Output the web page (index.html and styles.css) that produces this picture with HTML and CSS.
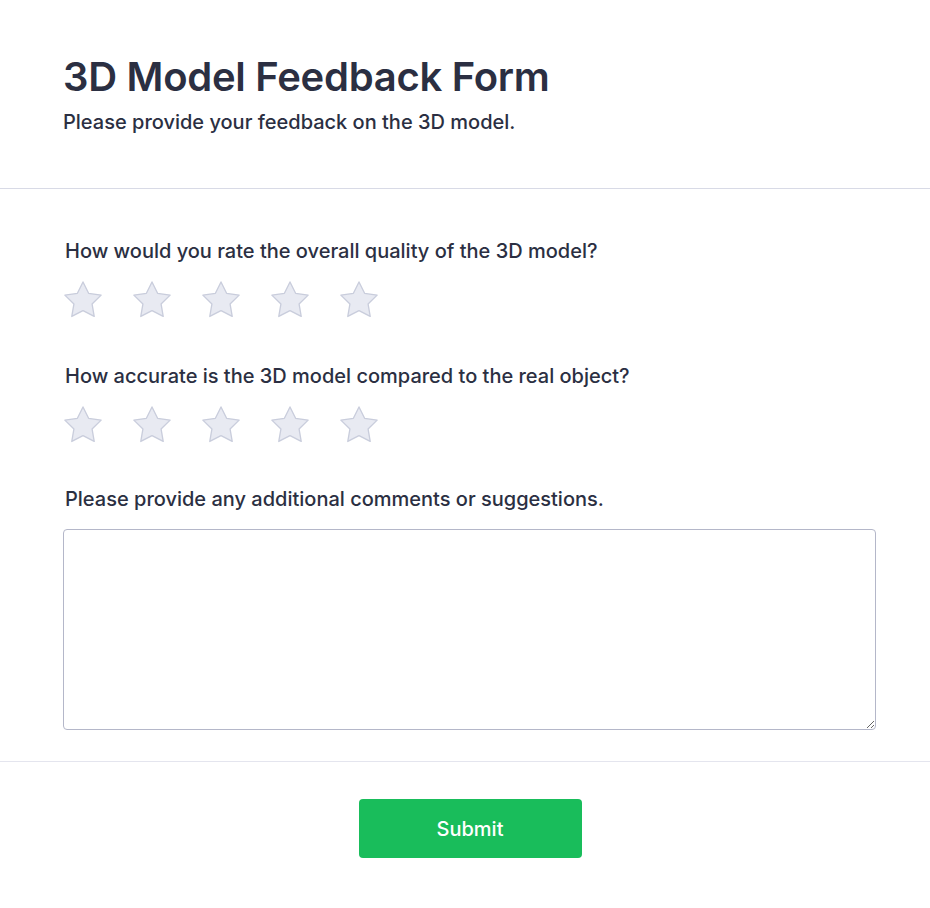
FILE: index.html
```html
<!DOCTYPE html>
<html lang="en">
<head>
<meta charset="utf-8">
<title>3D Model Feedback Form</title>
<link rel="stylesheet" href="styles.css">
</head>
<body>
<div class="form">
  <header class="form-header">
    <h1 class="title">3D Model Feedback Form</h1>
    <p class="subtitle">Please provide your feedback on the 3D model.</p>
  </header>
  <section class="form-body">
    <div class="question">
      <label class="q-label">How would you rate the overall quality of the 3D model?</label>
      <div class="stars">
        <svg class="star" viewBox="2 2 20 20"><path d="M12 2.5l2.95 5.98 6.6.96-4.78 4.65 1.13 6.57L12 17.56l-5.9 3.1 1.13-6.57-4.78-4.65 6.6-.96z"/></svg>
        <svg class="star" viewBox="2 2 20 20"><path d="M12 2.5l2.95 5.98 6.6.96-4.78 4.65 1.13 6.57L12 17.56l-5.9 3.1 1.13-6.57-4.78-4.65 6.6-.96z"/></svg>
        <svg class="star" viewBox="2 2 20 20"><path d="M12 2.5l2.95 5.98 6.6.96-4.78 4.65 1.13 6.57L12 17.56l-5.9 3.1 1.13-6.57-4.78-4.65 6.6-.96z"/></svg>
        <svg class="star" viewBox="2 2 20 20"><path d="M12 2.5l2.95 5.98 6.6.96-4.78 4.65 1.13 6.57L12 17.56l-5.9 3.1 1.13-6.57-4.78-4.65 6.6-.96z"/></svg>
        <svg class="star" viewBox="2 2 20 20"><path d="M12 2.5l2.95 5.98 6.6.96-4.78 4.65 1.13 6.57L12 17.56l-5.9 3.1 1.13-6.57-4.78-4.65 6.6-.96z"/></svg>
      </div>
    </div>
    <div class="question">
      <label class="q-label">How accurate is the 3D model compared to the real object?</label>
      <div class="stars">
        <svg class="star" viewBox="2 2 20 20"><path d="M12 2.5l2.95 5.98 6.6.96-4.78 4.65 1.13 6.57L12 17.56l-5.9 3.1 1.13-6.57-4.78-4.65 6.6-.96z"/></svg>
        <svg class="star" viewBox="2 2 20 20"><path d="M12 2.5l2.95 5.98 6.6.96-4.78 4.65 1.13 6.57L12 17.56l-5.9 3.1 1.13-6.57-4.78-4.65 6.6-.96z"/></svg>
        <svg class="star" viewBox="2 2 20 20"><path d="M12 2.5l2.95 5.98 6.6.96-4.78 4.65 1.13 6.57L12 17.56l-5.9 3.1 1.13-6.57-4.78-4.65 6.6-.96z"/></svg>
        <svg class="star" viewBox="2 2 20 20"><path d="M12 2.5l2.95 5.98 6.6.96-4.78 4.65 1.13 6.57L12 17.56l-5.9 3.1 1.13-6.57-4.78-4.65 6.6-.96z"/></svg>
        <svg class="star" viewBox="2 2 20 20"><path d="M12 2.5l2.95 5.98 6.6.96-4.78 4.65 1.13 6.57L12 17.56l-5.9 3.1 1.13-6.57-4.78-4.65 6.6-.96z"/></svg>
      </div>
    </div>
    <div class="question">
      <label class="q-label" for="comments">Please provide any additional comments or suggestions.</label>
      <textarea id="comments" class="comments"></textarea>
    </div>
  </section>
  <footer class="form-footer">
    <button class="submit" type="button">Submit</button>
  </footer>
</div>
</body>
</html>
```

FILE: styles.css
```css
* { box-sizing: border-box; }
html, body {
  margin: 0;
  padding: 0;
  background: #ffffff;
}
body {
  font-family: Inter, "Noto Sans", "Liberation Sans", sans-serif;
  color: #2d3142;
}
.form {
  width: 930px;
}
.form-header {
  padding: 53px 54px 52px 63px;
  border-bottom: 1px solid #d8dae6;
}
.title {
  margin: 0;
  font-size: 40px;
  line-height: 48px;
  font-weight: 600;
  letter-spacing: -0.28px;
  color: #2b2f42;
}
.subtitle {
  margin: 7px 0 0;
  font-size: 20px;
  line-height: 28px;
  font-weight: 500;
  color: #2b2f42;
}
.form-body {
  padding: 48px 54px 31px 63px;
  display: flex;
  flex-direction: column;
  gap: 43px;
}
.question {
  display: flex;
  flex-direction: column;
  gap: 16px;
}
.q-label {
  font-size: 20px;
  line-height: 28px;
  font-weight: 500;
  color: #2b2f42;
  padding-left: 2px;
}
.stars {
  display: flex;
  gap: 31px;
  height: 38px;
  padding-left: 1px;
}
.star {
  width: 38px;
  height: 38px;
  display: block;
}
.star path {
  fill: #e8eaf2;
  stroke: #c9cddc;
  stroke-width: 0.7;
  stroke-linejoin: round;
}
.comments {
  width: 813px;
  height: 201px;
  border: 1px solid #b4b7c9;
  border-radius: 4px;
  resize: vertical;
  font-family: inherit;
  font-size: 16px;
}
.form-body .question:nth-child(3) {
  margin-top: -2px;
}
.form-footer {
  border-top: 1px solid #e4e5ee;
  padding: 37px 54px 50px 64px;
  display: flex;
  justify-content: center;
}
.submit {
  width: 223px;
  height: 59px;
  background: #19bd5b;
  color: #ffffff;
  border: none;
  border-radius: 4px;
  font-family: inherit;
  font-size: 20px;
  font-weight: 500;
  cursor: pointer;
}
```
